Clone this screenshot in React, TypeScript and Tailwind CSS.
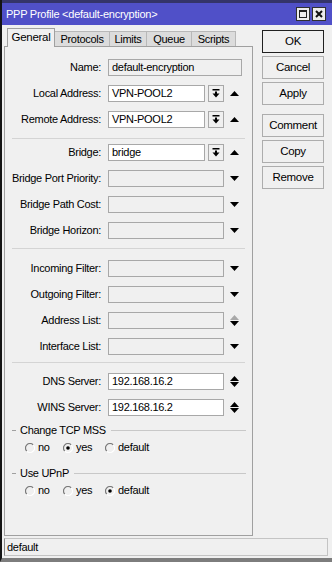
import type { ReactNode } from "react";

const font = { fontFamily: '"Liberation Sans", Arial, sans-serif' };

function DropIcon() {
  return (
    <svg width="8" height="9" viewBox="0 0 8 9">
      <rect x="0.5" y="0" width="7" height="1.5" fill="#000" />
      <rect x="3" y="2.5" width="2" height="2.5" fill="#000" />
      <polygon points="0.5,4.5 7.5,4.5 4,8.5" fill="#000" />
    </svg>
  );
}

function Up({ color = "#000" }: { color?: string }) {
  return (
    <svg width="9" height="5" viewBox="0 0 9 5">
      <polygon points="0,5 9,5 4.5,0" fill={color} />
    </svg>
  );
}

function Down({ color = "#000" }: { color?: string }) {
  return (
    <svg width="9" height="5" viewBox="0 0 9 5">
      <polygon points="0,0 9,0 4.5,5" fill={color} />
    </svg>
  );
}

function Spin({ upColor = "#000" }: { upColor?: string }) {
  return (
    <div className="flex flex-col items-center gap-[1px]">
      <Up color={upColor} />
      <Down />
    </div>
  );
}

function Box({ value, white, w }: { value?: string; white?: boolean; w: string }) {
  return (
    <div
      className={`${w} h-[17px] border border-[#a8a8a8] pl-[3px] leading-[15px] truncate ${
        white ? "bg-white" : "bg-[#f0f0f0]"
      }`}
    >
      {value}
    </div>
  );
}

function Combo({ value }: { value: string }) {
  return (
    <div className="flex items-center">
      <Box value={value} white w="w-[97px]" />
      <div className="ml-[3px] flex h-[17px] w-[16px] items-center justify-center border border-[#a8a8a8] bg-[#f0f0f0]">
        <DropIcon />
      </div>
    </div>
  );
}

function Row({ label, children, side }: { label: string; children: ReactNode; side?: ReactNode }) {
  return (
    <div className="flex h-[26px] items-center">
      <span className="w-[96px] shrink-0 text-right">{label}:</span>
      <div className="ml-[7px] flex items-center">{children}</div>
      {side && <div className="ml-[5px] flex w-[10px] justify-center">{side}</div>}
    </div>
  );
}

function Sep({ className }: { className: string }) {
  return <div className={`mx-[7px] h-px bg-[#d4d4d4] ${className}`} />;
}

function Radio({ on }: { on?: boolean }) {
  return (
    <svg width="10" height="10" viewBox="0 0 10 10">
      <path d="M8.2 1.8 A4.5 4.5 0 0 0 1.8 8.2" stroke="#7a7a7a" strokeWidth="1.2" fill="none" />
      <path d="M1.8 8.2 A4.5 4.5 0 0 0 8.2 1.8" stroke="#ffffff" strokeWidth="1.2" fill="none" />
      {on && <circle cx="5" cy="5" r="1.8" fill="#000" />}
    </svg>
  );
}

function Group({ title, value }: { title: string; value: string }) {
  const opts = [
    { k: "no", w: "w-[38px]" },
    { k: "yes", w: "w-[42px]" },
    { k: "default", w: "w-[60px]" },
  ];
  return (
    <div className="flex flex-col">
      <div className="flex h-[18px] items-center pl-[7px] pr-[6px]">
        <div className="h-px w-[4px] bg-[#a0a0a0]" />
        <span className="ml-[4px]">{title}</span>
        <div className="ml-[5px] h-px flex-1 bg-[#c8c8c8]" />
      </div>
      <div className="flex h-[17px] items-center pl-[20px]">
        {opts.map((o) => (
          <div key={o.k} className={`flex items-center ${o.w}`}>
            <Radio on={o.k === value} />
            <span className="ml-[3px]">{o.k}</span>
          </div>
        ))}
      </div>
    </div>
  );
}

const tabs = [
  { name: "General", w: "w-[48px]" },
  { name: "Protocols", w: "w-[55px]" },
  { name: "Limits", w: "w-[37px]" },
  { name: "Queue", w: "w-[45px]" },
  { name: "Scripts", w: "w-[44px]" },
];

function Btn({ children, def }: { children: string; def?: boolean }) {
  return (
    <div
      className={`flex h-[23px] w-[62px] items-center justify-center bg-[#f0f0f0] text-[11.5px] ${
        def ? "border border-[#202020]" : "border border-[#adadad]"
      }`}
    >
      {children}
    </div>
  );
}

export default function App() {
  return (
    <div
      className="flex h-[562px] w-[332px] flex-col border-l-2 border-b-4 border-l-[#141414] border-b-[#7d7d7d] bg-[#f0f0f0] text-[11px] tracking-[-0.3px] text-black"
      style={font}
    >
      {/* title bar */}
      <div className="flex h-[25px] shrink-0 items-center border-t-[3px] border-t-[#34346a] bg-[#5050c8] pl-[4px] pr-[6px]">
        <span className="flex-1 text-white tracking-[-0.25px]">PPP Profile &lt;default-encryption&gt;</span>
        <div className="flex gap-[2px]">
          <div className="flex h-[14px] w-[14px] items-center justify-center border border-[#303030] bg-[#ececec]">
            <div className="h-[8px] w-[8px] border border-[#202020] border-t-2" />
          </div>
          <div className="flex h-[14px] w-[14px] items-center justify-center border border-[#303030] bg-[#ececec]">
            <svg width="8" height="8" viewBox="0 0 8 8">
              <path d="M1 1 L7 7 M7 1 L1 7" stroke="#111" strokeWidth="2" />
            </svg>
          </div>
        </div>
      </div>

      {/* body */}
      <div className="flex h-[511px] shrink-0">
        <div className="ml-[2px] flex w-[249px] flex-col">
          <div className="flex h-[21px] items-end pl-[3px]">
            {tabs.map((t, i) =>
              i === 0 ? (
                <div
                  key={t.name}
                  className={`relative top-px z-10 flex h-[19px] items-center justify-center border border-b-0 border-[#a0a0a0] bg-[#f0f0f0] text-[11.5px] ${t.w}`}
                >
                  {t.name}
                </div>
              ) : (
                <div
                  key={t.name}
                  className={`flex h-[15px] items-center justify-center border border-b-0 border-l-0 border-[#b8b8b8] bg-[#dcdcdc] ${t.w}`}
                >
                  {t.name}
                </div>
              )
            )}
          </div>
          <div className="flex flex-1 flex-col border border-[#a0a0a0] pt-[7px]">
            <Row label="Name">
              <Box value="default-encryption" w="w-[134px]" />
            </Row>
            <Row label="Local Address" side={<Up />}>
              <Combo value="VPN-POOL2" />
            </Row>
            <Row label="Remote Address" side={<Up />}>
              <Combo value="VPN-POOL2" />
            </Row>
            <Sep className="mt-[6px]" />
            <Row label="Bridge" side={<Up />}>
              <Combo value="bridge" />
            </Row>
            <Row label="Bridge Port Priority" side={<Down />}>
              <Box w="w-[116px]" />
            </Row>
            <Row label="Bridge Path Cost" side={<Down />}>
              <Box w="w-[116px]" />
            </Row>
            <Row label="Bridge Horizon" side={<Down />}>
              <Box w="w-[116px]" />
            </Row>
            <Sep className="mt-[5px]" />
            <div className="mt-[6px]" />
            <Row label="Incoming Filter" side={<Down />}>
              <Box w="w-[116px]" />
            </Row>
            <Row label="Outgoing Filter" side={<Down />}>
              <Box w="w-[116px]" />
            </Row>
            <Row label="Address List" side={<Spin upColor="#a8a8a8" />}>
              <Box w="w-[116px]" />
            </Row>
            <Row label="Interface List" side={<Down />}>
              <Box w="w-[116px]" />
            </Row>
            <Sep className="mt-[3px]" />
            <div className="mt-[5px]" />
            <Row label="DNS Server" side={<Spin />}>
              <Box value="192.168.16.2" white w="w-[116px]" />
            </Row>
            <Row label="WINS Server" side={<Spin />}>
              <Box value="192.168.16.2" white w="w-[116px]" />
            </Row>
            <div className="mt-px" />
            <Group title="Change TCP MSS" value="yes" />
            <div className="mt-[8px]" />
            <Group title="Use UPnP" value="default" />
          </div>
        </div>

        <div className="ml-[9px] flex flex-col pt-[5px]">
          <div className="flex flex-col gap-[3px]">
            <Btn def>OK</Btn>
            <Btn>Cancel</Btn>
            <Btn>Apply</Btn>
          </div>
          <div className="mt-[9px] flex flex-col gap-[3px]">
            <Btn>Comment</Btn>
            <Btn>Copy</Btn>
            <Btn>Remove</Btn>
          </div>
        </div>
      </div>

      {/* status bar */}
      <div className="ml-[2px] mr-[4px] mt-[2px] flex h-[18px] items-center border border-[#c4c4c4] border-l-[#8a8a8a] pl-[2px]">
        default
      </div>
    </div>
  );
}
